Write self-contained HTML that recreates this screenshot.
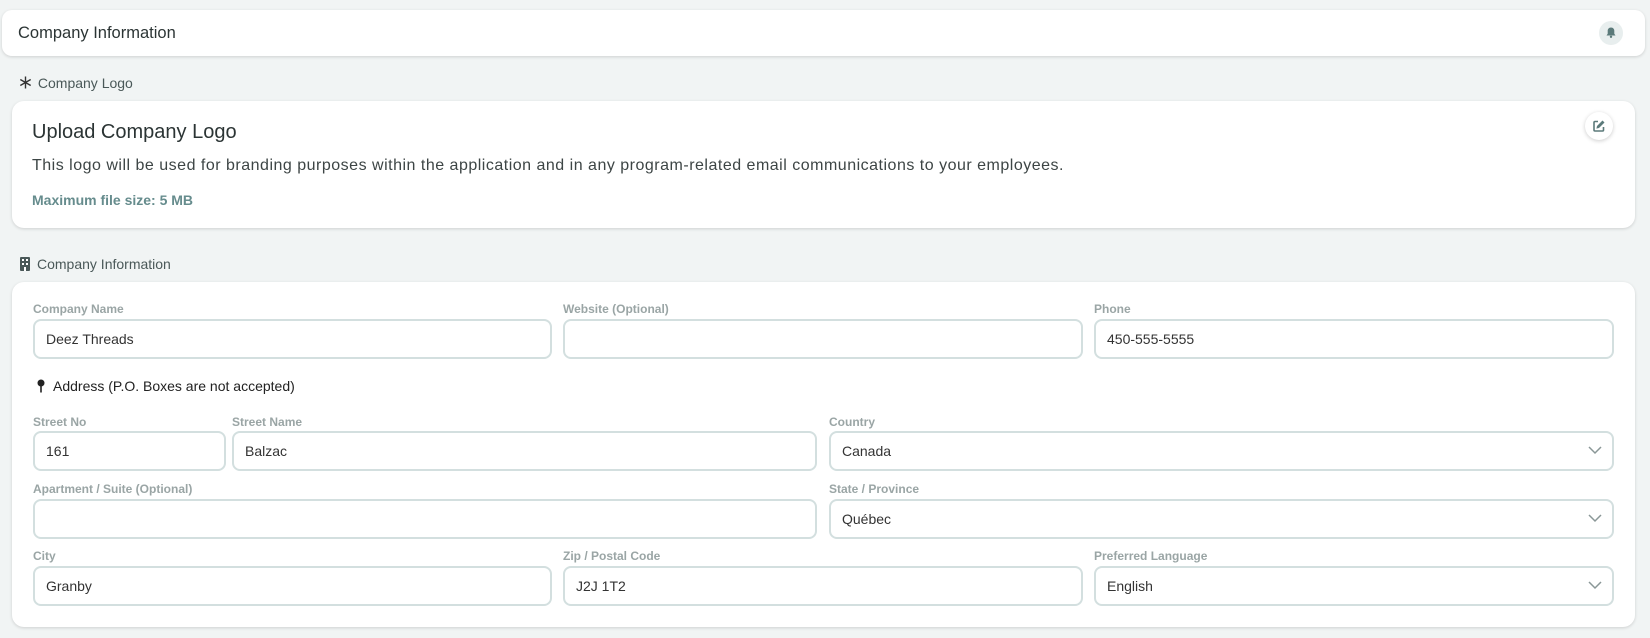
<!DOCTYPE html>
<html><head><meta charset="utf-8"><style>
*{box-sizing:border-box;margin:0;padding:0}
body{width:1650px;height:638px;background:#f1f4f4;font-family:"Liberation Sans",sans-serif;position:relative;overflow:hidden;color:#2f3a3a}
.abs{position:absolute}
.card{position:absolute;background:#fff;border-radius:12px;box-shadow:0 1px 3px rgba(0,0,0,.15)}
.lbl{position:absolute;font-size:12px;font-weight:bold;color:#9aa5a5;line-height:14px}
.inp{position:absolute;height:40px;border:2px solid #d3dfdf;border-radius:8px;font-size:14px;color:#333;padding-left:11px;line-height:36px;background:#fff}
.chev{position:absolute;right:10px;top:12px}
.sec{position:absolute;font-size:14px;color:#4a5858;line-height:16px}
</style></head><body>
<div class="card" style="left:2px;top:10px;width:1643px;height:46px;border-radius:10px">
  <div class="abs" style="left:16px;top:14px;font-size:16.5px;color:#2b3434">Company Information</div>
  <div class="abs" style="left:1597px;top:11px;width:24px;height:24px;border-radius:50%;background:#e8eeee">
    <svg width="24" height="24" viewBox="0 0 24 24"><path d="M12 6.5c-2 0-3.3 1.4-3.3 3.4v2.8L7.5 14.5h9l-1.2-1.8V9.9c0-2-1.3-3.4-3.3-3.4z" fill="#5b7a7a"/><circle cx="12" cy="15.8" r="1.2" fill="#5b7a7a"/></svg>
  </div>
</div>
<div class="sec" style="left:19px;top:75px"><svg width="13" height="13" viewBox="0 0 13 13" style="vertical-align:-1px"><g stroke="#333" stroke-width="1.4"><path d="M6.5 0.5v12M1.3 3.5l10.4 6M1.3 9.5l10.4-6"/></g></svg> <span style="margin-left:2px">Company Logo</span></div>
<div class="card" style="left:12px;top:101px;width:1623px;height:127px">
  <div class="abs" style="left:20px;top:20px;font-size:20px;color:#2b3434">Upload Company Logo</div>
  <div class="abs" style="left:20px;top:56px;font-size:16px;color:#3d4545;letter-spacing:0.5px;white-space:nowrap">This logo will be used for branding purposes within the application and in any program-related email communications to your employees.</div>
  <div class="abs" style="left:20px;top:91px;font-size:14px;font-weight:bold;color:#668c8d">Maximum file size: 5 MB</div>
  <div class="abs" style="left:1573px;top:11px;width:28px;height:28px;border-radius:50%;background:#fff;box-shadow:0 1px 4px rgba(0,0,0,.2)">
    <svg width="28" height="28" viewBox="0 0 28 28"><path d="M13 9.5H10a1 1 0 0 0-1 1V18a1 1 0 0 0 1 1h7.5a1 1 0 0 0 1-1v-3" fill="none" stroke="#5b7a7a" stroke-width="1.6"/><path d="M17.5 8.5l2 2-5.5 5.5-2.6.6.6-2.6z" fill="#5b7a7a"/></svg>
  </div>
</div>
<div class="sec" style="left:19px;top:256px"><svg width="12" height="14" viewBox="0 0 12 14" style="vertical-align:-2px"><rect x="1" y="0" width="10" height="14" rx="1" fill="#4a5858"/><g fill="#fff"><rect x="3" y="2" width="2" height="2"/><rect x="7" y="2" width="2" height="2"/><rect x="3" y="6" width="2" height="2"/><rect x="7" y="6" width="2" height="2"/><rect x="5" y="10" width="2" height="4"/></g></svg><span style="margin-left:6px">Company Information</span></div>
<div class="card" style="left:12px;top:282px;width:1623px;height:345px"></div>

<div class="lbl" style="left:33px;top:302px">Company Name</div>
<div class="inp" style="left:33px;top:319px;width:519px">Deez Threads</div>
<div class="lbl" style="left:563px;top:302px">Website (Optional)</div>
<div class="inp" style="left:563px;top:319px;width:520px"></div>
<div class="lbl" style="left:1094px;top:302px">Phone</div>
<div class="inp" style="left:1094px;top:319px;width:520px">450-555-5555</div>

<div class="abs" style="left:36px;top:378px;font-size:14px;color:#222"><svg width="10" height="14" viewBox="0 0 10 14" style="vertical-align:-2px"><circle cx="5" cy="4" r="3.5" fill="#222"/><rect x="4.2" y="6" width="1.6" height="7.5" fill="#222"/></svg>&nbsp; Address (P.O. Boxes are not accepted)</div>

<div class="lbl" style="left:33px;top:415px">Street No</div>
<div class="inp" style="left:33px;top:431px;width:193px">161</div>
<div class="lbl" style="left:232px;top:415px">Street Name</div>
<div class="inp" style="left:232px;top:431px;width:585px">Balzac</div>
<div class="lbl" style="left:829px;top:415px">Country</div>
<div class="inp" style="left:829px;top:431px;width:785px">Canada<svg class="chev" width="14" height="10" viewBox="0 0 14 10"><path d="M1 2l6 6 6-6" fill="none" stroke="#8a9797" stroke-width="1.5"/></svg></div>

<div class="lbl" style="left:33px;top:482px">Apartment / Suite (Optional)</div>
<div class="inp" style="left:33px;top:499px;width:784px"></div>
<div class="lbl" style="left:829px;top:482px">State / Province</div>
<div class="inp" style="left:829px;top:499px;width:785px">Québec<svg class="chev" width="14" height="10" viewBox="0 0 14 10"><path d="M1 2l6 6 6-6" fill="none" stroke="#8a9797" stroke-width="1.5"/></svg></div>

<div class="lbl" style="left:33px;top:549px">City</div>
<div class="inp" style="left:33px;top:566px;width:519px">Granby</div>
<div class="lbl" style="left:563px;top:549px">Zip / Postal Code</div>
<div class="inp" style="left:563px;top:566px;width:520px">J2J 1T2</div>
<div class="lbl" style="left:1094px;top:549px">Preferred Language</div>
<div class="inp" style="left:1094px;top:566px;width:520px">English<svg class="chev" width="14" height="10" viewBox="0 0 14 10"><path d="M1 2l6 6 6-6" fill="none" stroke="#8a9797" stroke-width="1.5"/></svg></div>
</body></html>
